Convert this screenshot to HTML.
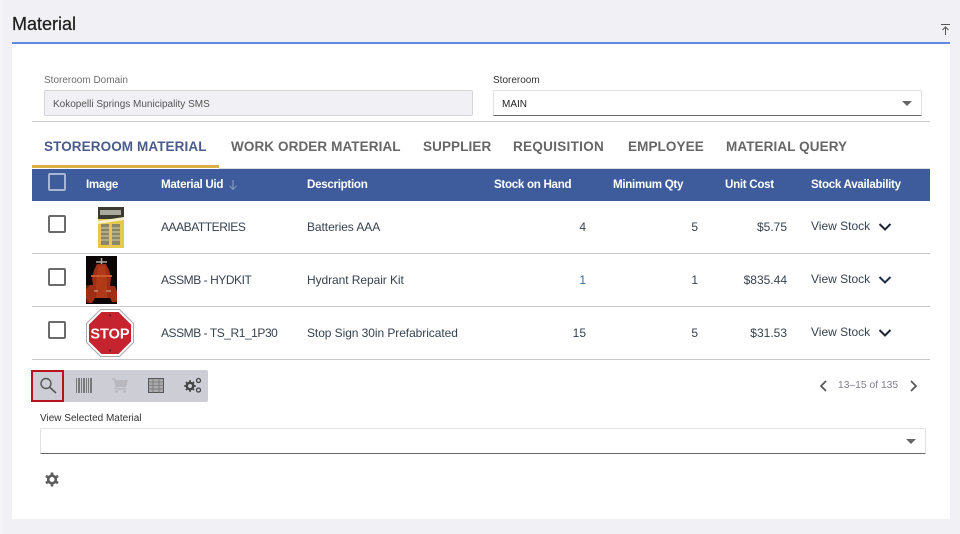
<!DOCTYPE html>
<html><head><meta charset="utf-8"><style>
*{box-sizing:border-box}
html,body{margin:0;padding:0}
body{width:960px;height:534px;background:#f0f0f5;position:relative;overflow:hidden;font-family:"Liberation Sans",sans-serif;color:#333}
.a{position:absolute;white-space:nowrap}
.t{font-size:12px;line-height:14px;color:#37424f}
.u{letter-spacing:-.45px}
.d{letter-spacing:-.07px}
.h{font-size:11.6px;line-height:14px;font-weight:bold;color:#fff;top:178px;letter-spacing:-.3px}
.tab{font-size:13.5px;line-height:18px;font-weight:bold;top:138px;color:#666;letter-spacing:.1px}
.cb{width:18px;height:18px;border:2px solid #6b6b6b;border-radius:2px;left:48px}
.n{text-align:right;width:60px}
.line{left:32px;width:898px;height:1px;background:#c8c8c8}
</style></head><body>
<div class="a" style="left:0;top:0;width:3px;height:534px;background:#f3f3f7"></div>
<div class="a" style="left:12px;top:13px;font-size:18px;line-height:22px;color:#1f1f1f;-webkit-text-stroke:.25px #1f1f1f">Material</div>
<svg class="a" style="left:940px;top:23px" width="12" height="13" viewBox="0 0 12 13" fill="none" stroke="#555" stroke-width="1"><path d="M1 1.5H10M5.5 12V4M2.5 7L5.5 4L8.5 7"/></svg>
<div class="a" style="left:12px;top:42px;width:938px;height:477px;background:#fff;border-top:2px solid #6488e6"></div>

<div class="a" style="left:44px;top:75px;font-size:10px;line-height:12px;color:#6e6e6e">Storeroom Domain</div>
<div class="a" style="left:44px;top:90px;width:429px;height:26px;background:#f0f0f5;border:1px solid #d5d5d8;border-radius:2px;font-size:10px;line-height:27px;padding-left:8px;color:#555">Kokopelli Springs Municipality SMS</div>
<div class="a" style="left:493px;top:75px;font-size:10px;line-height:12px;color:#333">Storeroom</div>
<div class="a" style="left:493px;top:90px;width:429px;height:26px;background:#fff;border:1px solid #e2e2e2;border-bottom:1px solid #666;border-radius:2px 2px 0 0;font-size:10px;line-height:27px;padding-left:8px;color:#222">MAIN</div>
<div class="a" style="left:902px;top:101px;width:0;height:0;border-left:5px solid transparent;border-right:5px solid transparent;border-top:5px solid #666"></div>
<div class="a line" style="top:121px;height:1px"></div>

<div class="a tab" style="left:44px;color:#4a5b8c">STOREROOM MATERIAL</div>
<div class="a tab" style="left:231px">WORK ORDER MATERIAL</div>
<div class="a tab" style="left:423px">SUPPLIER</div>
<div class="a tab" style="left:513px;letter-spacing:.3px">REQUISITION</div>
<div class="a tab" style="left:628px">EMPLOYEE</div>
<div class="a tab" style="left:726px">MATERIAL QUERY</div>
<div class="a" style="left:32px;top:165px;width:187px;height:3px;background:#deb043"></div>
<div class="a" style="left:219px;top:168px;width:711px;height:1px;background:#ddd"></div>

<div class="a" style="left:32px;top:169px;width:898px;height:32px;background:#3e5c9b"></div>
<div class="a" style="left:48px;top:173px;width:18px;height:18px;border:2px solid #a9b6d2;border-radius:2px"></div>
<div class="a h" style="left:86px">Image</div>
<div class="a h" style="left:161px">Material Uid</div>
<svg class="a" style="left:228px;top:179px" width="10" height="12" viewBox="0 0 10 12" fill="none" stroke="#8fa0c4" stroke-width="1"><path d="M5 1V10M1.5 6.8L5 10.3L8.5 6.8"/></svg>
<div class="a h" style="left:307px">Description</div>
<div class="a h" style="left:494px">Stock on Hand</div>
<div class="a h" style="left:613px">Minimum Qty</div>
<div class="a h" style="left:725px">Unit Cost</div>
<div class="a h" style="left:811px">Stock Availability</div>

<div class="a cb" style="top:215px"></div>
<div class="a cb" style="top:268px"></div>
<div class="a cb" style="top:321px"></div>

<svg class="a" style="left:98px;top:207px" width="26" height="41" viewBox="0 0 26 41"><rect width="26" height="41" fill="#e6c84a"/><rect width="26" height="12" fill="#3a3a30"/><rect x="2" y="3" width="21" height="5" fill="#a8a89c"/><path d="M0 14L26 10V13L0 17Z" fill="#f5f0c8"/><rect x="3" y="17" width="8" height="21" fill="#8a8668"/><rect x="14" y="17" width="8" height="21" fill="#8a8668"/><path d="M3 21H11M3 25H11M3 29H11M3 33H11M14 21H22M14 25H22M14 29H22M14 33H22" stroke="#d8d2a8" stroke-width="1"/></svg>
<svg class="a" style="left:86px;top:256px" width="31" height="48" viewBox="0 0 31 48"><rect width="31" height="48" fill="#0b0505"/><path d="M15.5 2V8M10 6H21" stroke="#b8a8a0" stroke-width="1.5"/><path d="M11 8H20L23 14L25 22L24 30H29L31 35V46H26L24 42H9L6 47H2L0 42V33L4 29H7L6 22L8 14Z" fill="#9e2f14"/><path d="M12 10H19L21 28V42H10V28Z" fill="#b03a18"/><rect x="5" y="19" width="21" height="2" fill="#c85a30"/><path d="M3 30A6 7 0 0 0 3 46" fill="none" stroke="#6e1f0c" stroke-width="2"/><path d="M8 35H12M20 35H25" stroke="#d8b0a0" stroke-width="1"/></svg>
<svg class="a" style="left:86px;top:309px" width="48" height="48" viewBox="0 0 48 48"><path d="M14.5 .5H33.5L47.5 14.5V33.5L33.5 47.5H14.5L.5 33.5V14.5Z" fill="#fff" stroke="#aaa"/><path d="M15.5 3H32.5L45 15.5V32.5L32.5 45H15.5L3 32.5V15.5Z" fill="#c5242f"/><text x="24" y="29.5" text-anchor="middle" font-family="Liberation Sans" font-weight="bold" font-size="14.5" fill="#fff">STOP</text><circle cx="24" cy="6.5" r="1" fill="#5a1015"/><circle cx="24" cy="41.5" r="1" fill="#5a1015"/></svg>

<div class="a t u" style="left:161px;top:220px">AAABATTERIES</div>
<div class="a t d" style="left:307px;top:220px">Batteries AAA</div>
<div class="a t n" style="left:526px;top:220px">4</div>
<div class="a t n" style="left:638px;top:220px">5</div>
<div class="a t n" style="left:727px;top:220px">$5.75</div>
<div class="a t" style="left:811px;top:219px">View Stock</div>
<div class="a line" style="top:253px"></div>

<div class="a t u" style="left:161px;top:273px">ASSMB - HYDKIT</div>
<div class="a t d" style="left:307px;top:273px">Hydrant Repair Kit</div>
<div class="a t n" style="left:526px;top:273px;color:#2f6ea5">1</div>
<div class="a t n" style="left:638px;top:273px">1</div>
<div class="a t n" style="left:727px;top:273px">$835.44</div>
<div class="a t" style="left:811px;top:272px">View Stock</div>
<div class="a line" style="top:306px"></div>

<div class="a t u" style="left:161px;top:326px">ASSMB - TS_R1_1P30</div>
<div class="a t d" style="left:307px;top:326px">Stop Sign 30in Prefabricated</div>
<div class="a t n" style="left:526px;top:326px">15</div>
<div class="a t n" style="left:638px;top:326px">5</div>
<div class="a t n" style="left:727px;top:326px">$31.53</div>
<div class="a t" style="left:811px;top:325px">View Stock</div>
<div class="a line" style="top:359px"></div>

<svg class="a" style="left:878px;top:222px" width="14" height="10" viewBox="0 0 14 10" fill="none" stroke="#1f2530" stroke-width="2"><path d="M1.5 2L7 7.5L12.5 2"/></svg>
<svg class="a" style="left:878px;top:275px" width="14" height="10" viewBox="0 0 14 10" fill="none" stroke="#1f2f4a" stroke-width="2"><path d="M1.5 2L7 7.5L12.5 2"/></svg>
<svg class="a" style="left:878px;top:328px" width="14" height="10" viewBox="0 0 14 10" fill="none" stroke="#1f2530" stroke-width="2"><path d="M1.5 2L7 7.5L12.5 2"/></svg>

<div class="a" style="left:32px;top:370px;width:176px;height:32px;background:#cdcdd5;border-radius:2px"></div>
<div class="a" style="left:31px;top:370px;width:33px;height:32px;border:2px solid #b8121c"></div>
<svg class="a" style="left:38px;top:376px" width="20" height="20" viewBox="0 0 20 20" fill="none" stroke="#555"><circle cx="8" cy="7.5" r="5" stroke-width="1.4"/><path d="M12 11.5L18 17" stroke-width="1.6"/></svg>
<svg class="a" style="left:76px;top:378px" width="16" height="15" viewBox="0 0 16 15" fill="#777"><path d="M0 0h1v15H0zM2 0h2v15H2zM5 0h1v15H5zM7 0h2v15H7zM10 0h1v15h-1zM12 0h1v15h-1zM14 0h2v15h-2z"/></svg>
<svg class="a" style="left:112px;top:378px" width="16" height="15" viewBox="0 0 16 15" fill="#b8b8be"><path d="M0 0H3L4 2H16L14 9H5L4.5 10H14V11.5H2.5L3.5 8.5L2 1.5H0Z"/><circle cx="4.5" cy="13.5" r="1.4"/><circle cx="12.5" cy="13.5" r="1.4"/></svg>
<svg class="a" style="left:148px;top:378px" width="16" height="15" viewBox="0 0 16 15"><rect x=".5" y=".5" width="15" height="14" fill="#a9a9ae" stroke="#555"/><path d="M.5 4H15.5M.5 7.5H15.5M.5 11H15.5M5 .5V14.5M11 .5V14.5" stroke="#777" stroke-width=".8"/></svg>
<svg class="a" style="left:184px;top:377px" width="18" height="17" viewBox="0 0 18 17" fill="none" stroke="#444"><circle cx="6" cy="9" r="3.2" stroke-width="2.4"/><path d="M6 3.2V5M6 13V14.8M.2 9H2M10 9H11.8M2 5L3.2 6.2M8.8 11.8L10 13M2 13L3.2 11.8M8.8 6.2L10 5" stroke-width="1.8"/><circle cx="14.5" cy="3.5" r="2" stroke-width="1.3"/><circle cx="14.5" cy="13" r="2" stroke-width="1.3"/></svg>

<svg class="a" style="left:817px;top:379px" width="12" height="14" viewBox="0 0 12 14" fill="none" stroke="#555" stroke-width="1.7"><path d="M9 2L4 7L9 12"/></svg>
<div class="a" style="left:838px;top:380px;font-size:10.3px;line-height:12px;color:#7d7d88">13–15 of 135</div>
<svg class="a" style="left:908px;top:379px" width="12" height="14" viewBox="0 0 12 14" fill="none" stroke="#555" stroke-width="1.7"><path d="M3 2L8 7L3 12"/></svg>

<div class="a" style="left:40px;top:413px;font-size:10px;line-height:12px;color:#333">View Selected Material</div>
<div class="a" style="left:40px;top:428px;width:886px;height:26px;background:#fff;border:1px solid #e2e2e2;border-bottom:1px solid #666;border-radius:2px 2px 0 0"></div>
<div class="a" style="left:906px;top:439px;width:0;height:0;border-left:5px solid transparent;border-right:5px solid transparent;border-top:5px solid #666"></div>
<svg class="a" style="left:45px;top:472px" width="14" height="15" viewBox="0 0 14 15" fill="none" stroke="#5c5c5c"><circle cx="7" cy="7.5" r="3.8" stroke-width="2.6"/><path d="M7 .5V3M7 12V14.5M.9 4L3.1 5.2M10.9 9.8L13.1 11M.9 11L3.1 9.8M10.9 5.2L13.1 4" stroke-width="2.6"/></svg>
</body></html>
